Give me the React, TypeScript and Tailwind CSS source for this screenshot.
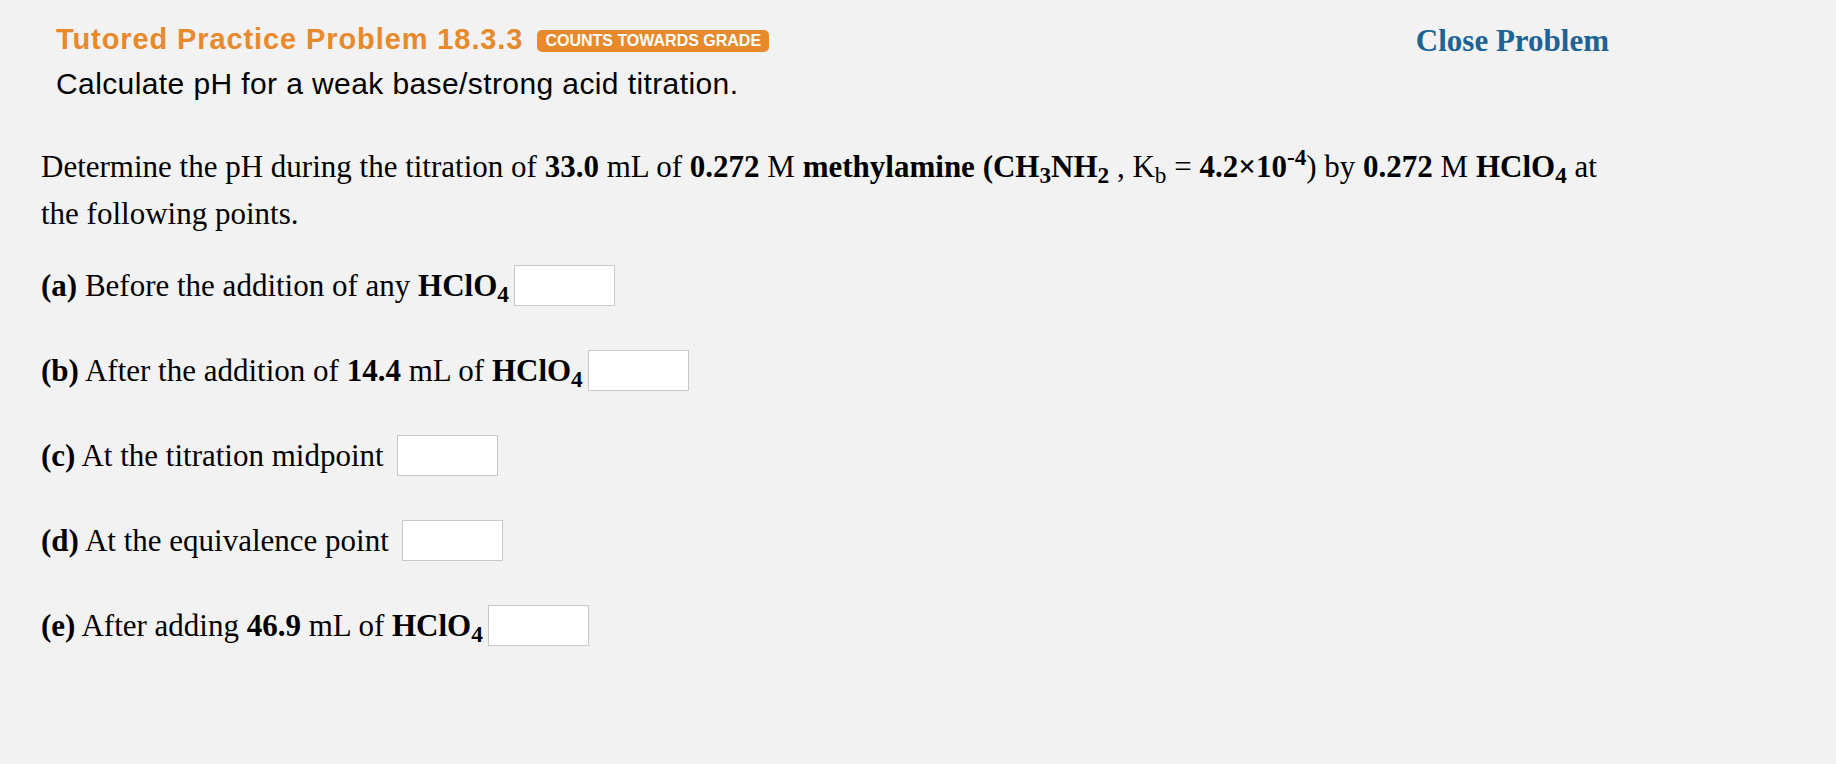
export default function App() {
  const items = [
    { label: "(a)", text: <>Before the addition of any <b>HClO<sub>4</sub></b></>, gap: false },
    { label: "(b)", text: <>After the addition of <b>14.4</b> mL of <b>HClO<sub>4</sub></b></>, gap: false },
    { label: "(c)", text: <>At the titration midpoint</>, gap: true },
    { label: "(d)", text: <>At the equivalence point</>, gap: true },
    { label: "(e)", text: <>After adding <b>46.9</b> mL of <b>HClO<sub>4</sub></b></>, gap: false },
  ];

  return (
    <div className="min-h-[764px] w-[1836px] bg-[#f2f2f2] text-black">
      {/* header */}
      <div className="flex items-start justify-between pl-[56px] pr-[227px] pt-[22px]">
        <div className="font-['Liberation_Sans',Arial,sans-serif]">
          <div className="flex items-center gap-[14px]">
            <h1 className="text-[29px] font-bold leading-[34px] tracking-[0.9px] text-[#e8892b]">
              Tutored Practice Problem 18.3.3
            </h1>
            <span className="mt-[3px] rounded-[5px] bg-[#e8892b] px-[8px] text-[16px] font-bold leading-[22px] text-white">
              COUNTS TOWARDS GRADE
            </span>
          </div>
          <p className="mt-[10px] text-[30px] leading-[36px] tracking-[0.4px]">
            Calculate pH for a weak base/strong acid titration.
          </p>
        </div>
        <a className="mt-[1px] font-['Liberation_Serif','Times_New_Roman',serif] text-[31px] font-bold leading-[36px] text-[#1c6396]">
          Close Problem
        </a>
      </div>

      {/* problem body */}
      <div className="pl-[41px] pt-[41px] font-['Liberation_Serif','Times_New_Roman',serif] text-[31px] leading-[47px]">
        <p className="w-[1580px]">
          Determine the pH during the titration of <b>33.0</b> mL of <b>0.272</b> M <b>methylamine</b>{" "}
          <b>(CH<sub>3</sub>NH<sub>2</sub></b> , K<sub>b</sub> = <b>4.2×10<sup>-4</sup></b>) by <b>0.272</b> M{" "}
          <b>HClO<sub>4</sub></b> at the following points.
        </p>

        <div className="mt-[25px] flex flex-col gap-[38px]">
          {items.map((it) => (
            <div key={it.label} className="flex items-center">
              <span>
                <b>{it.label}</b> {it.text}
              </span>
              <input
                className={`h-[41px] w-[101px] border border-[#c8c8c8] bg-white ${it.gap ? "ml-[13px]" : "ml-[5px]"}`}
              />
            </div>
          ))}
        </div>
      </div>
    </div>
  );
}
